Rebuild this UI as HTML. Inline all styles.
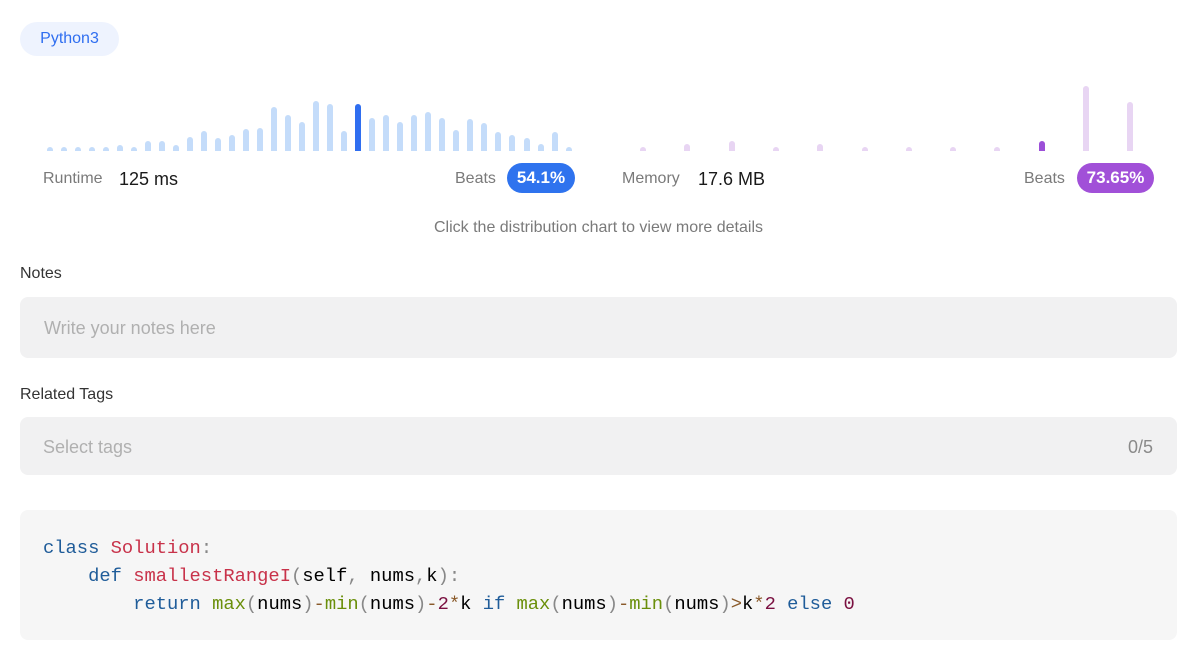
<!DOCTYPE html>
<html><head><style>
body{margin:0;width:1200px;height:659px;background:#fff;font-family:"Liberation Sans",sans-serif;position:relative;overflow:hidden}
.a{position:absolute}
.b{position:absolute;width:6px;border-radius:3px 3px 0 0;bottom:508px}
.l{background:#c4dcfa}.p{background:#e8d5f3}
.lbl{color:#7a7a7a;font-size:16px}
.val{color:#1a1a1a;font-size:18px}
.code{font-family:"Liberation Mono",monospace;font-size:18.8px;white-space:pre;line-height:28px}
</style></head><body>
<div class="a" style="left:20px;top:22px;width:99px;height:34px;border-radius:17px;background:#eef3fe;color:#2f6ef0;font-size:16px;line-height:34px;text-align:center">Python3</div>
<div id="c1"></div><div id="c2"></div>
<script>
var t=[200,200,200,200,200,196,200,183,183,196,170,153,175,165,148,145,80,105,127,63,72,153,72,115,105,127,105,97,115,150,118,130,157,165,175,192,157,200];
var h='';for(var i=0;i<t.length;i++){var x=49.5+i*14.03-3;var ht=Math.max((213-t[i])/3,4);h+='<div class="b '+(i==22?'':'l')+'" style="left:'+x+'px;height:'+ht+'px;'+(i==22?'background:#2f6ef0':'')+'"></div>';}
document.getElementById('c1').innerHTML=h;
var r=[200,192,183,200,192,200,200,200,200,183,18,67];h='';
for(i=0;i<r.length;i++){var ht=Math.max((213-r[i])/3,4);h+='<div class="b '+(i==9?'':'p')+'" style="left:'+(643+i*44.3-3)+'px;height:'+ht+'px;'+(i==9?'background:#9c4fd8':'')+'"></div>';}
document.getElementById('c2').innerHTML=h;
</script>
<div class="a lbl" style="left:43px;top:170px">Runtime</div>
<div class="a val" style="left:119px;top:169px">125 ms</div>
<div class="a lbl" style="left:455px;top:170px">Beats</div>
<div class="a" style="left:507px;top:163px;width:68px;height:30px;border-radius:15px;background:#2f73ee;color:#fff;font-size:17px;font-weight:bold;line-height:30px;text-align:center">54.1%</div>
<div class="a lbl" style="left:622px;top:170px">Memory</div>
<div class="a val" style="left:698px;top:169px">17.6 MB</div>
<div class="a lbl" style="left:1024px;top:170px">Beats</div>
<div class="a" style="left:1077px;top:163px;width:77px;height:30px;border-radius:15px;background:#a150d8;color:#fff;font-size:17px;font-weight:bold;line-height:30px;text-align:center">73.65%</div>
<div class="a" style="left:0;width:1197px;top:219px;text-align:center;color:#7a7a7a;font-size:16px">Click the distribution chart to view more details</div>
<div class="a" style="left:20px;top:265px;color:#333;font-size:16px">Notes</div>
<div class="a" style="left:20px;top:297px;width:1157px;height:61px;border-radius:8px;background:#f1f1f2"><span class="a" style="left:24px;top:21px;color:#b0b0b0;font-size:18px">Write your notes here</span></div>
<div class="a" style="left:20px;top:386px;color:#333;font-size:16px">Related Tags</div>
<div class="a" style="left:20px;top:417px;width:1157px;height:58px;border-radius:8px;background:#f1f1f2"><span class="a" style="left:23px;top:20px;color:#b0b0b0;font-size:18px">Select tags</span><span class="a" style="right:24px;top:20px;color:#8a8a8a;font-size:18px">0/5</span></div>
<div class="a" style="left:20px;top:510px;width:1157px;height:130px;border-radius:8px;background:#f6f6f6">
<div class="a code" style="left:23px;top:24px"><span style="color:#1f5c99">class</span> <span style="color:#c8324a">Solution</span><span style="color:#888">:</span>
    <span style="color:#1f5c99">def</span> <span style="color:#c8324a">smallestRangeI</span><span style="color:#888">(</span>self<span style="color:#888">,</span> nums<span style="color:#888">,</span>k<span style="color:#888">):</span>
        <span style="color:#1f5c99">return</span> <span style="color:#6a8f0a">max</span><span style="color:#888">(</span>nums<span style="color:#888">)</span><span style="color:#8a5a2a">-</span><span style="color:#6a8f0a">min</span><span style="color:#888">(</span>nums<span style="color:#888">)</span><span style="color:#8a5a2a">-</span><span style="color:#7a1040">2</span><span style="color:#8a5a2a">*</span>k <span style="color:#1f5c99">if</span> <span style="color:#6a8f0a">max</span><span style="color:#888">(</span>nums<span style="color:#888">)</span><span style="color:#8a5a2a">-</span><span style="color:#6a8f0a">min</span><span style="color:#888">(</span>nums<span style="color:#888">)</span><span style="color:#8a5a2a">&gt;</span>k<span style="color:#8a5a2a">*</span><span style="color:#7a1040">2</span> <span style="color:#1f5c99">else</span> <span style="color:#7a1040">0</span></div>
</div>
</body></html>
